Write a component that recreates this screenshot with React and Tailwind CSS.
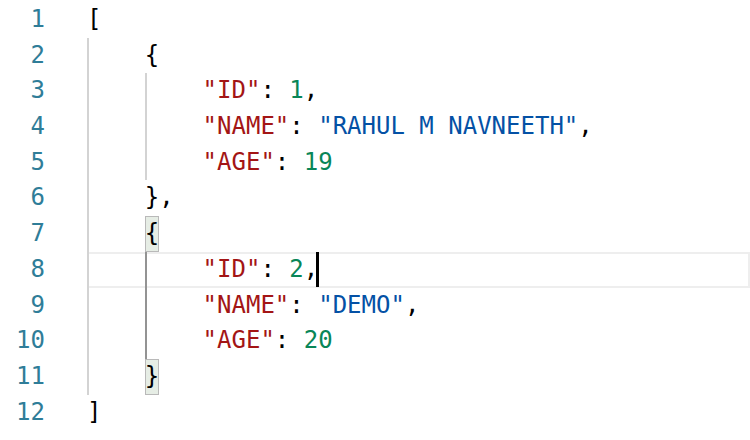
import React from "react";

// token kinds: p = punctuation, k = key, s = string, n = number
const LINES = [
  { guides: [], tokens: [["[", "p"]] },
  { guides: ["light"], tokens: [["{", "p"]] },
  { guides: ["light", "light"], tokens: [['"ID"', "k"], [": ", "p"], ["1", "n"], [",", "p"]] },
  { guides: ["light", "light"], tokens: [['"NAME"', "k"], [": ", "p"], ['"RAHUL M NAVNEETH"', "s"], [",", "p"]] },
  { guides: ["light", "light"], tokens: [['"AGE"', "k"], [": ", "p"], ["19", "n"]] },
  { guides: ["light"], tokens: [["}", "p"], [",", "p"]] },
  { guides: ["light"], tokens: [["{", "match"]] },
  { guides: ["light", "active"], tokens: [['"ID"', "k"], [": ", "p"], ["2", "n"], [",", "p"]], current: true },
  { guides: ["light", "active"], tokens: [['"NAME"', "k"], [": ", "p"], ['"DEMO"', "s"], [",", "p"]] },
  { guides: ["light", "active"], tokens: [['"AGE"', "k"], [": ", "p"], ["20", "n"]] },
  { guides: ["light"], tokens: [["}", "match"]] },
  { guides: [], tokens: [["]", "p"]] },
];

const tokenClass = {
  p: "text-black",
  k: "text-[#a31515]",
  s: "text-[#0451a5]",
  n: "text-[#098658]",
  match: "text-black bg-[#e6ede5] shadow-[inset_0_0_0_1px_#b9b9b9]",
};

const guideClass = {
  light: "shadow-[inset_2px_0_#d3d3d3]",
  active: "shadow-[inset_2px_0_#939393]",
};

function Row({ number, line }) {
  return (
    <div className="flex h-[35.7px] leading-[35.7px]">
      <div className="w-[87px] shrink-0">
        <div className="w-[45px] text-right text-[#2f7d98]">{number}</div>
      </div>
      <div
        className={`flex flex-1 whitespace-pre ${
          line.current ? "shadow-[inset_0_0_0_2px_#eeeeee]" : ""
        }`}
      >
        {line.guides.map((g, i) => (
          <span key={i} className={`w-[4ch] shrink-0 ${guideClass[g]}`} />
        ))}
        {line.tokens.map(([text, kind], i) => (
          <span key={i} className={tokenClass[kind]}>
            {text}
          </span>
        ))}
        {line.current ? (
          <span className="w-[3px] h-[35px] -ml-[2px] bg-black" />
        ) : null}
      </div>
    </div>
  );
}

export default function App() {
  return (
    <div className="w-[750px] h-[440px] overflow-hidden bg-white pt-[2px] font-['DejaVu_Sans_Mono',monospace] text-[24px]">
      {LINES.map((line, i) => (
        <Row key={i} number={i + 1} line={line} />
      ))}
    </div>
  );
}
